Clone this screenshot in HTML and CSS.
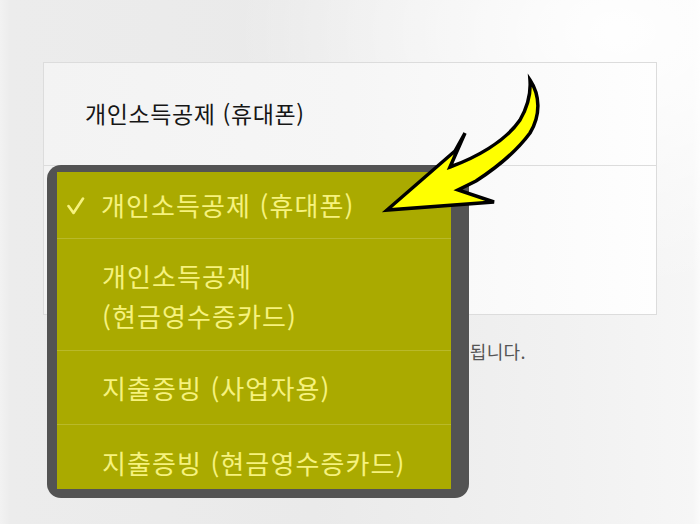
FILE: index.html
```html
<!DOCTYPE html>
<html lang="ko">
<head>
<meta charset="utf-8">
<link rel="stylesheet" href="styles.css">
</head>
<body>
<div class="page">
  <div class="card">
    <div class="row row-top">개인소득공제 (휴대폰)</div>
    <div class="row row-bottom"></div>
  </div>
  <p class="note">현금영수증은 자동으로 발급됩니다.</p>

  <div class="dropdown">
    <ul class="menu">
      <li class="item item-1">
        <svg class="check" width="18" height="18" viewBox="0 0 18 18"><polyline points="1.5,9 6.5,16 16,1.5" fill="none" stroke="#f6f27e" stroke-width="2.6" stroke-linecap="round" stroke-linejoin="round"/></svg>
        <span class="label">개인소득공제 (휴대폰)</span>
      </li>
      <li class="item item-2"><span class="label">개인소득공제<br>(현금영수증카드)</span></li>
      <li class="item item-3"><span class="label">지출증빙 (사업자용)</span></li>
      <li class="item item-4"><span class="label">지출증빙 (현금영수증카드)</span></li>
    </ul>
  </div>

  <svg class="arrow" width="700" height="524" viewBox="0 0 700 524">
    <path d="M 530 80 C 540 95, 541 115, 530 133 C 516 152, 496 168, 476 181 L 458 190 L 494 202 L 387 210 L 455 151 L 465 133 L 450 167 C 475 158, 505 142, 520 120 C 528 106, 531 93, 530 80 Z"
      fill="#ffff00" stroke="#000" stroke-width="3.5" stroke-linejoin="miter"/>
  </svg>
</div>
</body>
</html>
```

FILE: styles.css
```css
html, body {
  margin: 0;
  padding: 0;
}
body {
  width: 700px;
  height: 524px;
  overflow: hidden;
  font-family: "Noto Sans CJK KR", "Noto Sans", sans-serif;
  background:
    radial-gradient(ellipse 380px 260px at 88% 6%, rgba(255,255,255,0.95), rgba(255,255,255,0) 100%),
    linear-gradient(to right, #f2f2f2 0, #ececec 1.5%, #eaeaea 45%, #f1f1f1 80%, #f6f6f6 99%, #fbfbfb 100%);
}
.page {
  position: relative;
  width: 700px;
  height: 524px;
  box-sizing: border-box;
  padding: 62px 0 0 43px;
}
.card {
  width: 614px;
  box-sizing: border-box;
  border: 1px solid #dcdcdc;
  background: linear-gradient(to right, #f3f3f3, #f6f6f6 50%, #fefefe);
}
.row {
  box-sizing: border-box;
}
.row-top {
  height: 103px;
  border-bottom: 1px solid #dcdcdc;
  display: flex;
  align-items: center;
  padding-left: 41px;
  font-size: 23px;
  letter-spacing: 0.6px;
  color: #161616;
  padding-bottom: 2px;
}
.row-bottom {
  height: 148px;
}
.note {
  margin: 24px 0 0 0;
  width: 483px;
  text-align: right;
  white-space: nowrap;
  font-size: 18px;
  letter-spacing: 0.4px;
  color: #555;
  line-height: 24px;
}
.dropdown {
  position: absolute;
  left: 47px;
  top: 165px;
  width: 422px;
  height: 333px;
  box-sizing: border-box;
  background: #535353;
  border-radius: 14px;
  padding: 7px 18px 9px 10px;
}
.menu {
  list-style: none;
  margin: 0;
  padding: 0;
  height: 317px;
  overflow: hidden;
  background: #aaaa00;
}
.item {
  box-sizing: border-box;
  display: flex;
  align-items: center;
  padding-left: 45px;
  font-size: 26px;
  letter-spacing: 1.1px;
  line-height: 40px;
  color: #f6f27e;
  border-top: 1px solid #b9b92a;
  white-space: nowrap;
}
.item-1 {
  height: 66px;
  border-top: none;
  padding-left: 10px;
}
.item-1 .check {
  margin-right: 16px;
  margin-top: 1px;
}
.item-2 { height: 112px; }
.item-2 .label { margin-top: 2px; }
.item-3 { height: 74px; }
.item-4 { height: 76px; }
.arrow {
  position: absolute;
  left: 0;
  top: 0;
  pointer-events: none;
}
```
